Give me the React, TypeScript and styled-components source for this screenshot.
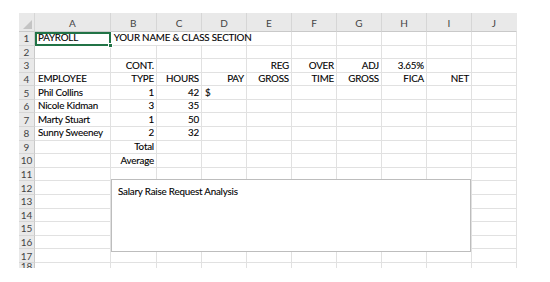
import styled, { createGlobalStyle } from 'styled-components';

const GlobalStyle = createGlobalStyle`
  html, body {
    margin: 0;
    padding: 0;
    background: #ffffff;
  }
  body {
    font-family: Lato, "Liberation Sans", sans-serif;
  }
`;

const COLS = ['A', 'B', 'C', 'D', 'E', 'F', 'G', 'H', 'I', 'J'];
const ROW_H = 13.58;

const Page = styled.div`
  padding: 13px 0 0 19px;
  width: 550px;
  height: 282px;
  box-sizing: border-box;
`;

const Sheet = styled.div`
  position: relative;
  width: 501px;
  height: 255px;
  overflow: hidden;
  display: grid;
  grid-template-columns: 16px 75.7px 46.3px repeat(8, 45px);
  grid-template-rows: 19px repeat(17, ${ROW_H}px) 8px;
  font-size: 9.8px;
  letter-spacing: -0.2px;
  -webkit-text-stroke: 0.1px #000;
  color: #000;
`;

const Corner = styled.div`
  background: #e9e9e9;
  border-right: 1px solid #d6d6d6;
  border-bottom: 1px solid #c9c9c9;
  position: relative;
  overflow: hidden;

  &::after {
    content: '';
    position: absolute;
    right: 2px;
    bottom: 2px;
    width: 0;
    height: 0;
    border-left: 9px solid transparent;
    border-bottom: 9px solid #c4c4c4;
  }
`;

const ColHead = styled.div<{ $last?: boolean }>`
  background: #e9e9e9;
  border-right: 1px solid ${(p) => (p.$last ? '#e9e9e9' : '#d6d6d6')};
  border-bottom: 1px solid #c9c9c9;
  display: flex;
  align-items: center;
  justify-content: center;
  color: #444;
  -webkit-text-stroke: 0;
  font-size: 10px;
  letter-spacing: 0;
  padding-top: 2px;
  box-sizing: border-box;
`;

const RowHead = styled.div`
  background: #e9e9e9;
  border-right: 1px solid #c9c9c9;
  border-bottom: 1px solid #d6d6d6;
  display: flex;
  align-items: center;
  justify-content: center;
  color: #444;
  -webkit-text-stroke: 0;
  font-size: 10px;
  letter-spacing: 0;
  line-height: 1;
  box-sizing: border-box;
`;

const Cell = styled.div<{ $align?: 'left' | 'right'; $span?: number; $selected?: boolean }>`
  grid-column: span ${(p) => p.$span ?? 1};
  border-right: 1px solid #e1e1e1;
  border-bottom: 1px solid #e1e1e1;
  box-sizing: border-box;
  display: flex;
  align-items: center;
  justify-content: ${(p) => (p.$align === 'right' ? 'flex-end' : 'flex-start')};
  padding: 0 2px 0 3px;
  white-space: nowrap;
  line-height: 1;
  position: relative;
  ${(p) =>
    p.$selected &&
    `
    outline: 2px solid #217346;
    outline-offset: -2px;
    z-index: 2;
    &::after {
      content: '';
      position: absolute;
      right: -3px;
      bottom: -3px;
      width: 5px;
      height: 5px;
      background: #217346;
      border: 1px solid #fff;
      box-sizing: border-box;
    }
  `}
`;

const TextBox = styled.div`
  position: absolute;
  left: 92px;
  top: 166px;
  width: 360px;
  height: 73px;
  box-sizing: border-box;
  background: #ffffff;
  border: 1px solid #bdbdbd;
  padding: 5px 6px;
  color: #000;
  z-index: 3;
`;

type C = { t?: string; a?: 'left' | 'right'; s?: number };

const R = (t: string): C => ({ t, a: 'right' });
const L = (t: string): C => ({ t, a: 'left' });
const E: C = {};

const rows: C[][] = [
  [L('PAYROLL'), { t: 'YOUR NAME & CLASS SECTION', a: 'left', s: 3 }, E, E, E, E, E, E],
  [E, E, E, E, E, E, E, E, E, E],
  [E, R('CONT.'), E, E, R('REG'), R('OVER'), R('ADJ'), R('3.65%'), E, E],
  [L('EMPLOYEE'), R('TYPE'), R('HOURS'), R('PAY'), R('GROSS'), R('TIME'), R('GROSS'), R('FICA'), R('NET'), E],
  [L('Phil Collins'), R('1'), R('42'), L('$'), E, E, E, E, E, E],
  [L('Nicole Kidman'), R('3'), R('35'), E, E, E, E, E, E, E],
  [L('Marty Stuart'), R('1'), R('50'), E, E, E, E, E, E, E],
  [L('Sunny Sweeney'), R('2'), R('32'), E, E, E, E, E, E, E],
  [E, R('Total'), E, E, E, E, E, E, E, E],
  [E, R('Average'), E, E, E, E, E, E, E, E],
];

while (rows.length < 18) rows.push(COLS.map(() => E));

export default function App() {
  return (
    <Page>
      <GlobalStyle />
      <Sheet>
        <Corner />
        {COLS.map((c, i) => (
          <ColHead key={c} $last={i === COLS.length - 1}>
            {c}
          </ColHead>
        ))}
        {rows.map((row, r) => [
          <RowHead key={`h${r}`}>{r + 1}</RowHead>,
          ...row.map((cell, c) => (
            <Cell
              key={`${r}-${c}`}
              $align={cell.a}
              $span={cell.s}
              $selected={r === 0 && c === 0}
            >
              {cell.t}
            </Cell>
          )),
        ])}
        <TextBox>Salary Raise Request Analysis</TextBox>
      </Sheet>
    </Page>
  );
}
